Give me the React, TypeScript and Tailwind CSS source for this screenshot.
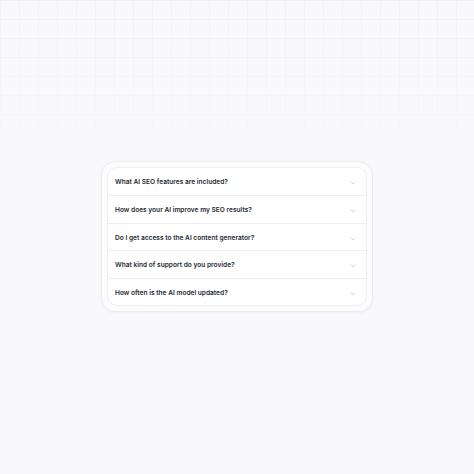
import { ChevronDown } from 'lucide-react';

const questions = [
  'What AI SEO features are included?',
  'How does your AI improve my SEO results?',
  'Do I get access to the AI content generator?',
  'What kind of support do you provide?',
  'How often is the AI model updated?',
];

export default function App() {
  return (
    <div
      className="relative flex h-[474px] w-[474px] items-center justify-center overflow-hidden bg-[#f9f9fb]"
      style={{ fontFamily: 'Inter, "Noto Sans", sans-serif' }}
    >
      {/* Background grid */}
      <div className="pointer-events-none absolute inset-x-0 top-0 h-[170px] bg-[linear-gradient(to_right,#f1f2f4_1px,transparent_1px),linear-gradient(to_bottom,#eef0f2_1px,transparent_1px)] bg-[size:19px_19px] [mask-image:linear-gradient(to_bottom,black,transparent)]" />

      <div className="relative mt-[-1px] rounded-[14px] border border-[#ebecef] bg-[#fcfcfd] p-[5px] shadow-[0_1px_3px_rgba(0,0,0,0.04)]">
        <div className="w-[260px] overflow-hidden rounded-[10px] border border-[#eeeff2] bg-white">
          {questions.map((q, i) => (
            <div
              key={q}
              className={
                'flex h-[27.5px] items-center justify-between pt-[3px] pl-[7px] pr-[9px] ' +
                (i > 0 ? 'border-t border-[#eeeff2]' : '')
              }
            >
              <span className="text-[6.6px] font-semibold text-[#262a33]">{q}</span>
              <ChevronDown className="h-[8px] w-[8px] text-[#b5b8c0]" strokeWidth={2} />
            </div>
          ))}
        </div>
      </div>
    </div>
  );
}
